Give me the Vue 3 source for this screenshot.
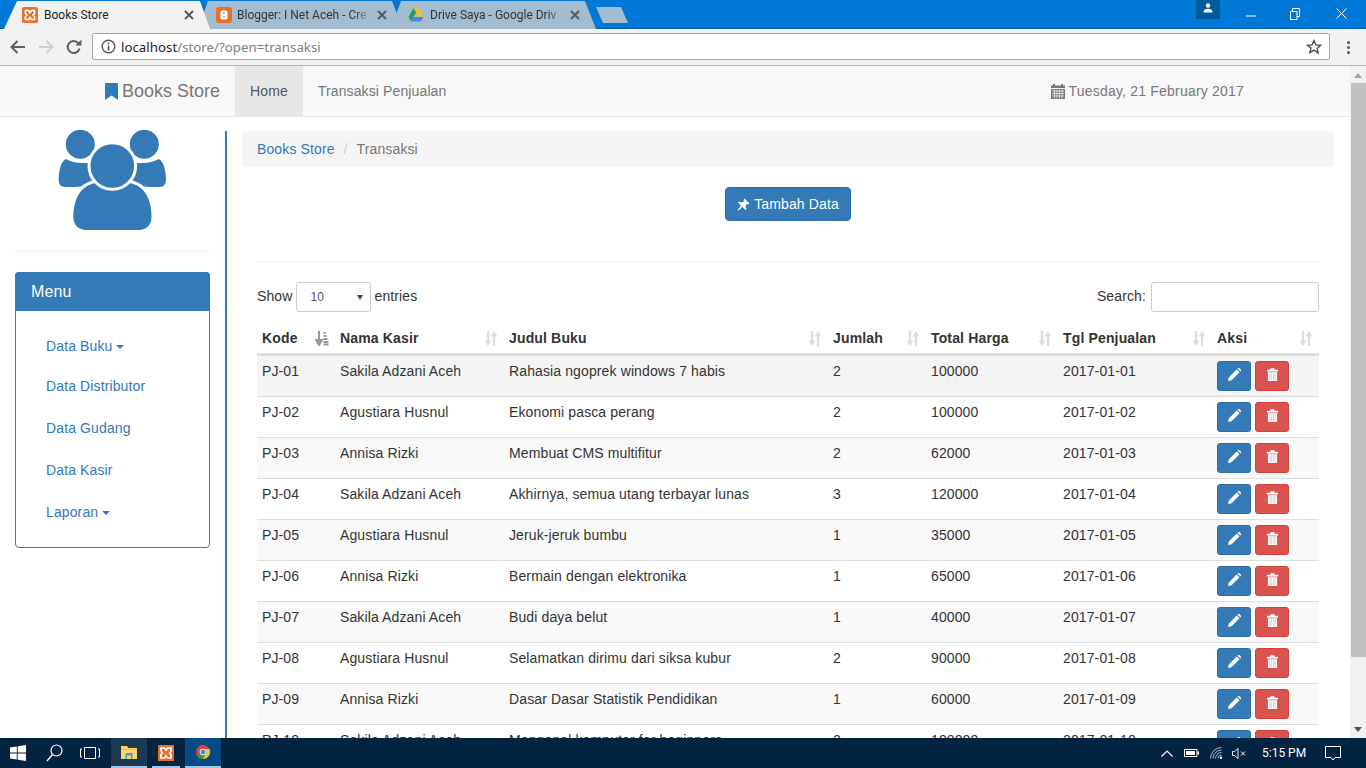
<script setup>
const rows = [
  ['PJ-01', 'Sakila Adzani Aceh', 'Rahasia ngoprek windows 7 habis', 2, 100000, '2017-01-01'],
  ['PJ-02', 'Agustiara Husnul', 'Ekonomi pasca perang', 2, 100000, '2017-01-02'],
  ['PJ-03', 'Annisa Rizki', 'Membuat CMS multifitur', 2, 62000, '2017-01-03'],
  ['PJ-04', 'Sakila Adzani Aceh', 'Akhirnya, semua utang terbayar lunas', 3, 120000, '2017-01-04'],
  ['PJ-05', 'Agustiara Husnul', 'Jeruk-jeruk bumbu', 1, 35000, '2017-01-05'],
  ['PJ-06', 'Annisa Rizki', 'Bermain dengan elektronika', 1, 65000, '2017-01-06'],
  ['PJ-07', 'Sakila Adzani Aceh', 'Budi daya belut', 1, 40000, '2017-01-07'],
  ['PJ-08', 'Agustiara Husnul', 'Selamatkan dirimu dari siksa kubur', 2, 90000, '2017-01-08'],
  ['PJ-09', 'Annisa Rizki', 'Dasar Dasar Statistik Pendidikan', 1, 60000, '2017-01-09'],
  ['PJ-10', 'Sakila Adzani Aceh', 'Mengenal komputer for beginners', 2, 100000, '2017-01-10'],
]
const heads = [
  ['Kode', 78], ['Nama Kasir', 169], ['Judul Buku', 324], ['Jumlah', 98],
  ['Total Harga', 132], ['Tgl Penjualan', 154], ['Aksi', 107],
]
const menu = [
  { t: 'Data Buku', c: true }, { t: 'Data Distributor' }, { t: 'Data Gudang' },
  { t: 'Data Kasir' }, { t: 'Laporan', c: true },
]
</script>

<template>
  <div class="screen">
    <div class="tabstrip">
      <div class="tab active">
        <svg class="fav" viewBox="0 0 16 16"><rect width="16" height="16" rx="2" fill="#e8702a"/><path d="M3.500 3.500h3l1.500 2 1.500-2h3v3l-1.500 1.500 1.500 1.500v3h-3l-1.500-2-1.500 2h-3v-3l1.500-1.500-1.500-1.500z" fill="none" stroke="#fff" stroke-width="1.700"/></svg>
        <span class="tabtext">Books Store</span>
        <svg class="tabx" width="10" height="10" viewBox="0 0 10 10"><path d="M1 1l8 8M9 1l-8 8" stroke="#555" stroke-width="1.800"/></svg>
      </div>
      <div class="tab t2">
        <svg class="fav" viewBox="0 0 16 16"><rect width="16" height="16" rx="3" fill="#e2732f"/><rect x="4.500" y="3.500" width="7" height="9" rx="2" fill="#fff"/><path d="M6.500 6h2.500M6.500 10h3" stroke="#e2732f" stroke-width="1.200"/></svg>
        <span class="tabtext fade">Blogger: I Net Aceh - Cre</span>
        <svg class="tabx" width="10" height="10" viewBox="0 0 10 10"><path d="M1 1l8 8M9 1l-8 8" stroke="#555" stroke-width="1.800"/></svg>
      </div>
      <div class="tab t3">
        <svg class="fav" viewBox="0 0 16 16"><path d="M5.500 1h5l5 9h-5z" fill="#f4c020"/><path d="M5.500 1L.5 10l2.500 4.500 5-9z" fill="#2a9a55"/><path d="M3 14.500h10l2.500-4.500h-10z" fill="#4286f0"/></svg>
        <span class="tabtext fade">Drive Saya - Google Driv</span>
        <svg class="tabx" width="10" height="10" viewBox="0 0 10 10"><path d="M1 1l8 8M9 1l-8 8" stroke="#555" stroke-width="1.800"/></svg>
      </div>
      <div class="newtab"></div>
      <div class="winbtns">
        <div class="userbox">
          <svg width="10" height="10" viewBox="0 0 10 10"><circle cx="5" cy="2.500" r="2.200" fill="#fff"/><path d="M.5 9.500c0-3 2-3.800 4.500-3.800s4.500.8 4.500 3.800z" fill="#fff"/></svg>
        </div>
        <svg class="wb1" width="10" height="10" viewBox="0 0 10 10"><path d="M0 7h10" stroke="#fff"/></svg>
        <svg class="wb2" width="10" height="12" viewBox="0 0 10 12"><path d="M.5 3.500h6.500v8h-6.500zM2.500 3.500v-3h7v8h-2.500" fill="none" stroke="#fff"/></svg>
        <svg class="wb3" width="11" height="11" viewBox="0 0 11 11"><path d="M.5.500l10 10M10.500.500l-10 10" stroke="#fff"/></svg>
      </div>
    </div>

    <div class="toolbar">
      <svg class="tool t-back" width="16" height="14" viewBox="0 0 16 14"><path d="M15 7H2M7.500 1L1.500 7l6 6" fill="none" stroke="#5f5f5f" stroke-width="2"/></svg>
      <svg class="tool t-fwd" width="16" height="14" viewBox="0 0 16 14"><path d="M1 7h13M8.500 1l6 6-6 6" fill="none" stroke="#cfcfcf" stroke-width="2"/></svg>
      <svg class="tool t-rel" width="16" height="16" viewBox="0 0 16 16"><path d="M13.500 9.500a6 6 0 1 1-1.200-5.300" fill="none" stroke="#5f5f5f" stroke-width="2"/><path d="M9.500 6.500h6v-6z" fill="#5f5f5f"/></svg>
      <div class="omni">
        <svg width="15" height="15" viewBox="0 0 15 15"><circle cx="7.500" cy="7.500" r="6.300" fill="none" stroke="#555" stroke-width="1.400"/><path d="M7.500 6.500v5M7.500 3.500v1.800" stroke="#555" stroke-width="1.600"/></svg>
        <span class="url"><b>localhost</b>/store/?open=transaksi</span>
        <svg class="star" width="16" height="16" viewBox="0 0 16 16"><path d="M8 1.500l1.900 4.400 4.700.4-3.600 3.100 1.100 4.700L8 11.100l-4.100 2.500 1.100-4.700L1.400 6.300l4.700-.4z" fill="none" stroke="#444" stroke-width="1.300"/></svg>
      </div>
      <div class="dots"><i></i><i></i><i></i></div>
    </div>

    <div class="viewport">
      <div class="page">
        <nav class="navbar">
          <div class="brand">
            <svg width="13" height="17" viewBox="0 0 13 17"><path d="M0 1q0-1 1-1h11q1 0 1 1v16l-6.500-4.500L0 17z" fill="#337ab7"/></svg>
            <span>Books Store</span>
          </div>
          <a class="navlink on">Home</a>
          <a class="navlink">Transaksi Penjualan</a>
          <div class="date">
            <svg width="14" height="15" viewBox="0 0 14 15"><rect y="1.500" width="14" height="13.500" fill="#777"/><path d="M3 0v3M11 0v3" stroke="#777" stroke-width="2"/><path d="M0 4.500h14" stroke="#f8f8f8"/><path d="M1 7h12M1 9.500h12M1 12h12M3.500 5.500v9M6 5.500v9M8.500 5.500v9M11 5.500v9" stroke="#f8f8f8" stroke-width=".7"/></svg>
            <span>Tuesday, 21 February 2017</span>
          </div>
        </nav>

        <div class="layout">
          <aside class="side">
            <svg class="users" width="110" height="100" viewBox="58 130 110 100">
              <path d="M66 159Q73 163 82 163L96 163L96 185L75 187L66 187C60 187 58.500 184 58.700 178C59 170 61 161 66 159Z" fill="#337ab7"/>
              <circle cx="80.300" cy="144.300" r="15.500" fill="#337ab7" stroke="#fff" stroke-width="2"/>
              <g transform="translate(224.600 0) scale(-1 1)">
                <path d="M66 159Q73 163 82 163L96 163L96 185L75 187L66 187C60 187 58.500 184 58.700 178C59 170 61 161 66 159Z" fill="#337ab7"/>
                <circle cx="80.300" cy="144.300" r="15.500" fill="#337ab7" stroke="#fff" stroke-width="2"/>
              </g>
              <path d="M95 183L130 183C145 186 151.500 200 151.500 217C151.500 225 146 230 139 230L86 230C79 230 73.300 225 73.300 217C73.300 200 80 186 95 183Z" fill="#fff" stroke="#fff" stroke-width="6"/>
              <path d="M95 183L130 183C145 186 151.500 200 151.500 217C151.500 225 146 230 139 230L86 230C79 230 73.300 225 73.300 217C73.300 200 80 186 95 183Z" fill="#337ab7"/>
              <circle cx="112.300" cy="166" r="23.300" fill="#337ab7" stroke="#fff" stroke-width="3"/>
            </svg>
            <div class="siderule"></div>
            <div class="panel">
              <div class="panel-head">Menu</div>
              <ul class="panel-body">
                <li v-for="m in menu" :key="m.t"><a>{{ m.t }}<i v-if="m.c" class="caret"></i></a></li>
              </ul>
            </div>
          </aside>

          <main class="main">
            <div class="crumb"><a>Books Store</a><span class="sep">/</span><span>Transaksi</span></div>
            <div class="inner">
              <div class="addwrap">
                <button class="addbtn">
                  <svg width="13" height="13" viewBox="0 0 13 13"><path d="M7.500.500L12.500 5.500 11 6.500 9.500 6 8.500 9 9.500 11 8.500 12 5.500 9 1.500 12.500 .5 12 4 7.500 1 4.500 2 3.500 4 4.500 7 3.500 6.500 2z" fill="#fff"/></svg>
                  <span>Tambah Data</span>
                </button>
              </div>
              <div class="rule"></div>
              <div class="controls">
                <div class="lenctl">
                  <span class="lift">Show</span>
                  <div class="select"><span>10</span><i></i></div>
                  <span class="lift">entries</span>
                </div>
                <div class="searchctl"><span class="lift">Search:</span><div class="input"></div></div>
              </div>
              <table class="grid">
                <colgroup><col v-for="h in heads" :key="h[0]" :style="{ width: h[1] + 'px' }" /></colgroup>
                <thead>
                  <tr>
                    <th v-for="(h, i) in heads" :key="h[0]">
                      <div class="thin">
                        <span>{{ h[0] }}</span>
                        <svg v-if="i === 0" width="14" height="15" viewBox="0 0 14 15"><path d="M4 0v11M1 9l3 5 3-5z" fill="#999" stroke="#999" stroke-width="2"/><path d="M8.500 2h2M8.500 5h3M8.500 8h4M8.500 11h5M8.500 13.500h5" stroke="#999" stroke-width="2"/></svg>
                        <svg v-else width="14" height="15" viewBox="0 0 14 15"><path d="M4 0v10" stroke="#ddd" stroke-width="2.400"/><path d="M.5 9.500h7L4 15z" fill="#ddd"/><path d="M10 15V5" stroke="#ddd" stroke-width="2.400"/><path d="M6.500 5.500h7L10 0z" fill="#ddd"/></svg>
                      </div>
                    </th>
                  </tr>
                </thead>
                <tbody>
                  <tr v-for="r in rows" :key="r[0]">
                    <td v-for="(c, j) in r" :key="j">{{ c }}</td>
                    <td>
                      <div class="acts">
                        <button class="act edit"><svg width="13" height="13" viewBox="0 0 13 13"><path d="M0 13l.8-3.600L8.700 1.500l2.800 2.800L3.600 12.200zM9.500.7l.8-.7q.5-.3 1 0l1.700 1.700q.3.500 0 1l-.7.800z" fill="#fff"/></svg></button>
                        <button class="act del"><svg width="11" height="13" viewBox="0 0 12 14"><path d="M0 2.200h12v1.300H0zM4 2.200V.5h4v1.700" fill="#fff" stroke="#fff" stroke-width=".6"/><path d="M1 4.500h10V14H1z" fill="#fff"/><path d="M3.300 5.500V13M5 5.500V13M7 5.500V13M8.700 5.500V13" stroke="#eebbb9" stroke-width=".8"/></svg></button>
                      </div>
                    </td>
                  </tr>
                </tbody>
              </table>
            </div>
          </main>
        </div>
      </div>
      <div class="scrollbar">
        <i class="sc-up"></i>
        <div class="thumb"></div>
        <i class="sc-down"></i>
      </div>
    </div>

    <footer class="taskbar">
      <svg class="start" width="16" height="16" viewBox="0 0 16 16"><path d="M0 2.500l6.800-1v6H0zM7.700 1.300L16 0v7.500H7.700zM0 8.400h6.800v6l-6.800-1zM7.700 8.400H16V16l-8.300-1.200z" fill="#fff"/></svg>
      <svg class="search" width="17" height="18" viewBox="0 0 17 18"><circle cx="10.500" cy="6.500" r="5.500" fill="none" stroke="#fff" stroke-width="1.200"/><path d="M6.500 10.500L1 17" stroke="#fff" stroke-width="1.300"/></svg>
      <svg class="taskview" width="20" height="12" viewBox="0 0 20 12"><path d="M4.500.5h11v11h-11z" fill="none" stroke="#fff"/><path d="M2 2H.5v8H2M18 2h1.500v8H18" fill="none" stroke="#fff"/></svg>
      <div class="tile t-explorer">
        <svg width="16" height="14" viewBox="0 0 16 14"><path d="M0 1h6l1.500 2H16v11H0z" fill="#fbd568"/><path d="M0 4.500h16" stroke="#f0c040"/><path d="M4.500 8h7v6h-1.500v-3.500h-4V14H4.500z" fill="#3aa2e0"/></svg>
      </div>
      <div class="tile t-xampp">
        <svg width="16" height="16" viewBox="0 0 16 16"><rect width="16" height="16" fill="#e8702a"/><path d="M3 3h3.500L8 5l1.500-2H13v3.500L11.500 8 13 9.500V13H9.500L8 11l-1.500 2H3V9.500L4.500 8 3 6.500z" fill="none" stroke="#fff" stroke-width="1.700"/></svg>
      </div>
      <div class="tile t-chrome">
        <svg width="14" height="14" viewBox="0 0 14 14"><circle cx="7" cy="7" r="7" fill="#de4638"/><path d="M7 7L1 10.500A7 7 0 0 0 7 14L10.500 7z" fill="#2a9a4f"/><path d="M7 4h6.400A7 7 0 0 1 7 14l3.500-7z" fill="#f6c325"/><circle cx="7" cy="7" r="3.300" fill="#fff"/><circle cx="7" cy="7" r="2.500" fill="#4b8be8"/></svg>
      </div>
      <div class="tray">
        <svg class="tr-chev" width="12" height="7" viewBox="0 0 12 7"><path d="M.5 6.500L6 1l5.500 5.500" fill="none" stroke="#fff" stroke-width="1.200"/></svg>
        <svg class="tr-bat" width="15" height="8" viewBox="0 0 15 8"><path d="M.5.500h12.500v7H.5z" fill="none" stroke="#fff"/><path d="M2 2h9v4H2zM13.500 2.500H15v3h-1.500z" fill="#fff"/></svg>
        <svg class="tr-wifi" width="13" height="12" viewBox="0 0 13 12"><path d="M.5 11.500a11 11 0 0 1 11-11M3 11.500a8.500 8.500 0 0 1 8.500-8.500M5.500 11.500a6 6 0 0 1 6-6M8 11.500a3.500 3.500 0 0 1 3.500-3.500" fill="none" stroke="#c5ced6" stroke-width=".9"/><circle cx="11" cy="10.800" r="1.200" fill="#fff"/></svg>
        <svg class="tr-vol" width="14" height="11" viewBox="0 0 14 11"><path d="M.5 3.500h2L6 .5v10L2.500 7.500h-2z" fill="none" stroke="#fff" stroke-width=".9"/><path d="M9 3.500l4 4M13 3.500l-4 4" stroke="#fff"/></svg>
        <span class="clock">5:15 PM</span>
        <svg class="tr-note" width="16" height="15" viewBox="0 0 16 15"><path d="M.5.500h15v11H10l-2 2.500-2-2.500H.5z" fill="none" stroke="#fff"/></svg>
      </div>
    </footer>
  </div>
</template>

<style>
html, body { margin: 0; overflow: hidden; }
</style>

<style scoped>
* { box-sizing: border-box; }
.screen { width: 1366px; height: 768px; display: flex; flex-direction: column; overflow: hidden; font-family: "Liberation Sans", Arial, sans-serif; font-size: 14px; color: #333; background: #fff; }

.tabstrip { height: 29px; flex: none; background: #0078d7; box-shadow: inset 0 -1px 0 #0063b1; display: flex; align-items: flex-start; padding: 1px 0 0 4px; position: relative; }
.tab { width: 205px; height: 28px; margin-right: -12px; padding: 0 12px 0 18px; display: flex; align-items: center; background: #a3bcd0; clip-path: polygon(10px 0, calc(100% - 11px) 0, 100% 100%, 0 100%); font-family: Roboto, sans-serif; font-size: 12px; color: #333; position: relative; }
.tab.active { width: 206px; background: #f2f2f2; color: #222; z-index: 3; clip-path: polygon(13px 0, calc(100% - 10px) 0, 100% 100%, 0 100%); }
.t2 { z-index: 2; }
.t3 { z-index: 1; padding-left: 17px; margin-right: 0; }
.fav { width: 16px; height: 16px; flex: none; margin-right: 5px; }
.active .fav, .t3 .fav { margin-right: 6px; }
.tabtext { flex: 1; white-space: nowrap; overflow: hidden; }
.fade { -webkit-mask-image: linear-gradient(90deg, #000 88%, transparent); mask-image: linear-gradient(90deg, #000 88%, transparent); }
.tabx { flex: none; margin-left: 6px; margin-right: 4px; }
.newtab { width: 32px; height: 16px; margin-top: 6px; background: #a3bcd0; clip-path: polygon(0 0, calc(100% - 7px) 0, 100% 100%, 7px 100%); }
.winbtns { position: absolute; right: 0; top: 0; width: 170px; height: 29px; }
.userbox { position: absolute; left: 0; top: 0; width: 24px; height: 19px; background: #005a9e; display: flex; align-items: flex-start; justify-content: center; padding-top: 3px; }
.wb1 { position: absolute; left: 50px; top: 9px; }
.wb2 { position: absolute; left: 94px; top: 8px; }
.wb3 { position: absolute; left: 140px; top: 8px; }

.toolbar { height: 37px; flex: none; background: #f2f2f2; border-bottom: 1px solid #b4b4b4; display: flex; align-items: center; padding-left: 10px; }
.t-fwd { margin-left: 12px; }
.t-rel { margin-left: 12px; }
.omni { margin-left: 10px; width: 1238px; height: 27px; margin-top: -1px; background: #fff; border: 1px solid #a9a9a9; border-radius: 2px; display: flex; align-items: center; padding: 0 7px 0 8px; }
.url { margin-left: 5px; font-family: "Noto Sans", sans-serif; font-size: 13.300px; color: #808080; white-space: nowrap; }
.url b { font-weight: 400; color: #222; }
.star { margin-left: auto; }
.dots { margin-left: 17px; display: flex; flex-direction: column; gap: 2px; }
.dots i { width: 3px; height: 3px; border-radius: 50%; background: #555; display: block; }

.viewport { flex: 1; min-height: 0; display: flex; overflow: hidden; }
.page { width: 1350px; flex: none; overflow: hidden; letter-spacing: .12px; }
.navbar { height: 51px; background: #f8f8f8; border-bottom: 1px solid #e7e7e7; display: flex; align-items: stretch; padding-left: 105px; color: #777; }
.brand { width: 130px; display: flex; align-items: center; gap: 4px; font-size: 18px; color: #777; letter-spacing: 0; }
.navlink { display: flex; align-items: center; padding: 0 15px; color: #777; }
.navlink.on { background: #e7e7e7; color: #555; }
.date { margin-left: auto; margin-right: 106px; display: flex; align-items: center; gap: 4px; letter-spacing: .2px; }

.layout { display: flex; align-items: flex-start; margin-top: 14px; height: 607px; }
.side { width: 227px; height: 100%; flex: none; border-right: 2px solid #337ab7; padding: 0 15px; }
.users { display: block; margin: -1px 0 0 43px; }
.siderule { height: 1px; background: #eee; margin-top: 21px; }
.panel { margin-top: 20px; width: 195px; height: 276px; border: 1px solid #337ab7; border-radius: 4px; }
.panel-head { height: 39px; margin: -1px -1px 0; background: #337ab7; color: #fff; font-size: 16px; padding: 0 16px; display: flex; align-items: center; border-radius: 4px 4px 0 0; }
.panel-body { list-style: none; margin: 0; padding: 15px; }
.panel-body li { margin-top: 2px; }
.panel-body li:first-child, .panel-body li:nth-child(2) { margin-top: 0; }
.panel-body a { display: block; padding: 10px 15px; line-height: 20px; color: #337ab7; }
.caret { display: inline-block; margin-left: 4px; vertical-align: middle; border-top: 4px solid #337ab7; border-left: 4px solid transparent; border-right: 4px solid transparent; }

.main { width: 1092px; margin-left: 15px; flex: none; }
.crumb { height: 36px; background: #f5f5f5; border-radius: 4px; padding: 8px 15px; line-height: 20px; color: #777; }
.crumb a { color: #337ab7; }
.sep { color: #ccc; padding: 0 9px; }
.inner { padding: 0 15px; }
.addwrap { margin-top: 20px; display: flex; justify-content: center; }
.addbtn { width: 126px; height: 34px; background: #337ab7; border: 1px solid #2e6da4; border-radius: 4px; color: #fff; font: 14px "Liberation Sans", Arial, sans-serif; letter-spacing: .12px; display: flex; align-items: center; justify-content: center; gap: 4px; padding: 0; }
.rule { height: 1px; background: #eee; margin-top: 40px; }
.controls { margin-top: 20px; height: 30px; display: flex; justify-content: space-between; align-items: center; }
.lenctl, .searchctl { display: flex; align-items: center; }
.lift { margin-top: -2px; }
.select { width: 75px; height: 30px; margin: 0 4px 0 3px; border: 1px solid #ccc; border-radius: 3px; display: flex; align-items: center; justify-content: space-between; padding: 0 7px 0 14px; font-size: 12px; color: #555; }
.select i { border-top: 5px solid #444; border-left: 3px solid transparent; border-right: 3px solid transparent; }
.input { width: 168px; height: 30px; margin-left: 5px; border: 1px solid #ccc; border-radius: 3px; }
.grid { margin-top: 8px; width: 1062px; table-layout: fixed; border-collapse: collapse; }
th { padding: 8px 5px 5px; border-bottom: 3px solid #ddd; font-weight: 700; line-height: 20px; text-align: left; letter-spacing: .15px; }
.thin { display: flex; align-items: center; justify-content: space-between; padding-right: 1px; }
td { padding: 5px; vertical-align: top; line-height: 20px; border-bottom: 1px solid #ddd; white-space: nowrap; overflow: hidden; }
tbody tr:nth-child(odd) { background: #f9f9f9; }
tbody tr:first-child { background: #f4f4f4; }
.acts { display: flex; gap: 4px; }
.act { width: 34px; height: 30px; border-radius: 3px; border: 1px solid; display: flex; align-items: center; justify-content: center; padding: 0; }
.act svg { margin-bottom: 3px; }
.edit { background: #337ab7; border-color: #2e6da4; }
.del { background: #d9534f; border-color: #d43f3a; }

.scrollbar { width: 16px; flex: none; background: #f1f1f1; display: flex; flex-direction: column; align-items: center; position: relative; padding-top: 17px; }
.thumb { width: 15px; margin-left: 1px; height: 574px; background: #c1c1c1; }
.sc-up { position: absolute; top: 7px; left: 4px; border-bottom: 5px solid #a3a3a3; border-left: 4px solid transparent; border-right: 4px solid transparent; }
.sc-down { position: absolute; bottom: 6px; left: 4px; border-top: 5px solid #505050; border-left: 4px solid transparent; border-right: 4px solid transparent; }

.taskbar { height: 30px; flex: none; background: #022441; display: flex; align-items: center; padding-left: 10px; position: relative; }
.search { margin-left: 20px; }
.taskview { margin-left: 17px; }
.tile { width: 36px; height: 30px; display: flex; align-items: center; justify-content: center; position: relative; }
.t-explorer { margin-left: 11px; background: #1b3a52; border-bottom: 2px solid #9ec8ea; }
.t-xampp { margin-left: 1px; }
.t-xampp::after { content: ""; position: absolute; left: 4px; right: 4px; bottom: 0; height: 2px; background: #9ec8ea; }
.t-chrome { margin-left: 1px; background: #044a84; border-bottom: 2px solid #9ec8ea; }
.tray { margin-left: auto; display: flex; align-items: center; color: #fff; }
.tr-bat { margin-left: 11px; }
.tr-wifi { margin-left: 11px; }
.tr-vol { margin-left: 9px; }
.clock { margin-left: 16px; width: 41px; white-space: nowrap; font-family: Roboto, sans-serif; font-size: 12px; }
.tr-note { margin-left: 22px; margin-right: 25px; }
</style>
